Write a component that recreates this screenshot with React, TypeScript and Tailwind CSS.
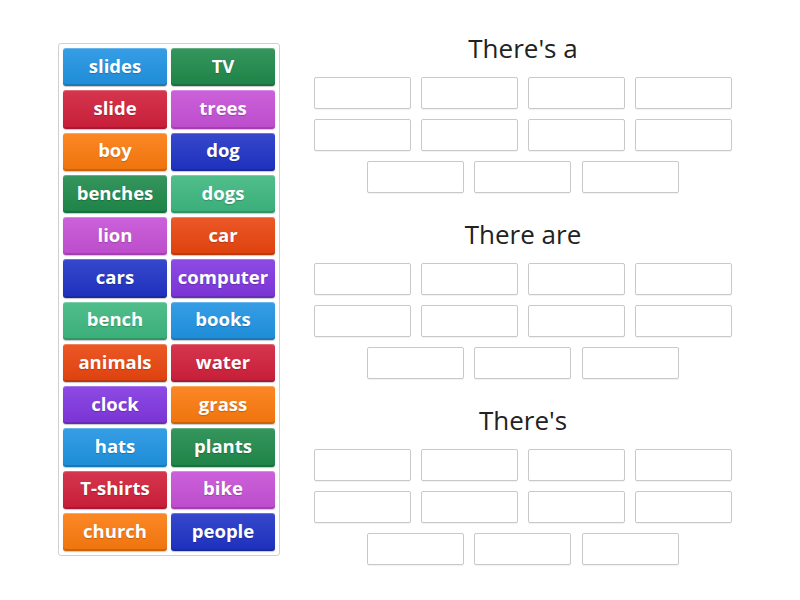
import React from 'react';

const tiles = [
  { text: 'slides', color: 'bg-[#1f93e2]' },
  { text: 'TV', color: 'bg-[#1f8a4b]' },
  { text: 'slide', color: 'bg-[#d11f3b]' },
  { text: 'trees', color: 'bg-[#c650d6]' },
  { text: 'boy', color: 'bg-[#fb7a0d]' },
  { text: 'dog', color: 'bg-[#1f33c6]' },
  { text: 'benches', color: 'bg-[#1f8a4b]' },
  { text: 'dogs', color: 'bg-[#3db77f]' },
  { text: 'lion', color: 'bg-[#c650d6]' },
  { text: 'car', color: 'bg-[#e9450e]' },
  { text: 'cars', color: 'bg-[#1f33c6]' },
  { text: 'computer', color: 'bg-[#8036e0]' },
  { text: 'bench', color: 'bg-[#3db77f]' },
  { text: 'books', color: 'bg-[#1f93e2]' },
  { text: 'animals', color: 'bg-[#e9450e]' },
  { text: 'water', color: 'bg-[#d11f3b]' },
  { text: 'clock', color: 'bg-[#8036e0]' },
  { text: 'grass', color: 'bg-[#fb7a0d]' },
  { text: 'hats', color: 'bg-[#1f93e2]' },
  { text: 'plants', color: 'bg-[#1f8a4b]' },
  { text: 'T-shirts', color: 'bg-[#d11f3b]' },
  { text: 'bike', color: 'bg-[#c650d6]' },
  { text: 'church', color: 'bg-[#fb7a0d]' },
  { text: 'people', color: 'bg-[#1f33c6]' },
];

const groups = ["There's a", 'There are', "There's"];

const Slot: React.FC = () => (
  <div className="w-[97px] h-[32px] rounded-[2px] border border-[#c9c9c9] bg-white shadow-[0_1px_1px_rgba(0,0,0,0.06)]" />
);

const Group: React.FC<{ title: string }> = ({ title }) => (
  <div className="flex flex-col items-center">
    <h2 className="h-[36px] leading-[36px] text-[26px] text-[#222] font-normal">{title}</h2>
    <div className="mt-[11px] flex flex-col items-center gap-[10px]">
      <div className="flex gap-[10.3px]">
        {[0, 1, 2, 3].map((i) => <Slot key={i} />)}
      </div>
      <div className="flex gap-[10.3px]">
        {[0, 1, 2, 3].map((i) => <Slot key={i} />)}
      </div>
      <div className="flex gap-[10.5px]">
        {[0, 1, 2].map((i) => <Slot key={i} />)}
      </div>
    </div>
  </div>
);

const App: React.FC = () => {
  return (
    <div className="w-[800px] h-[600px] bg-white flex items-start font-['Open_Sans',sans-serif]">
      {/* word bank */}
      <div className="ml-[58px] mt-[43px] p-[4px] border border-[#d0d0d0] rounded-[3px] bg-white grid grid-cols-[104px_104px] gap-x-[4px] gap-y-[4px]">
        {tiles.map((t) => (
          <div
            key={t.text}
            className={`${t.color} h-[38.25px] rounded-[3px] flex items-center justify-center pb-[2px] text-white font-bold text-[18.5px] leading-none bg-[linear-gradient(rgba(255,255,255,0.1),rgba(0,0,0,0.05))] shadow-[inset_0_-2px_0_rgba(0,0,0,0.14),inset_0_1px_0_rgba(255,255,255,0.25),0_1px_1px_rgba(0,0,0,0.22)] [text-shadow:0_1px_1px_rgba(0,0,0,0.2)]`}
          >
            {t.text}
          </div>
        ))}
      </div>

      {/* drop zones */}
      <div className="ml-[33px] mt-[30px] w-[420px] flex flex-col gap-[23px]">
        {groups.map((g) => (
          <Group key={g} title={g} />
        ))}
      </div>
    </div>
  );
};

export default App;
